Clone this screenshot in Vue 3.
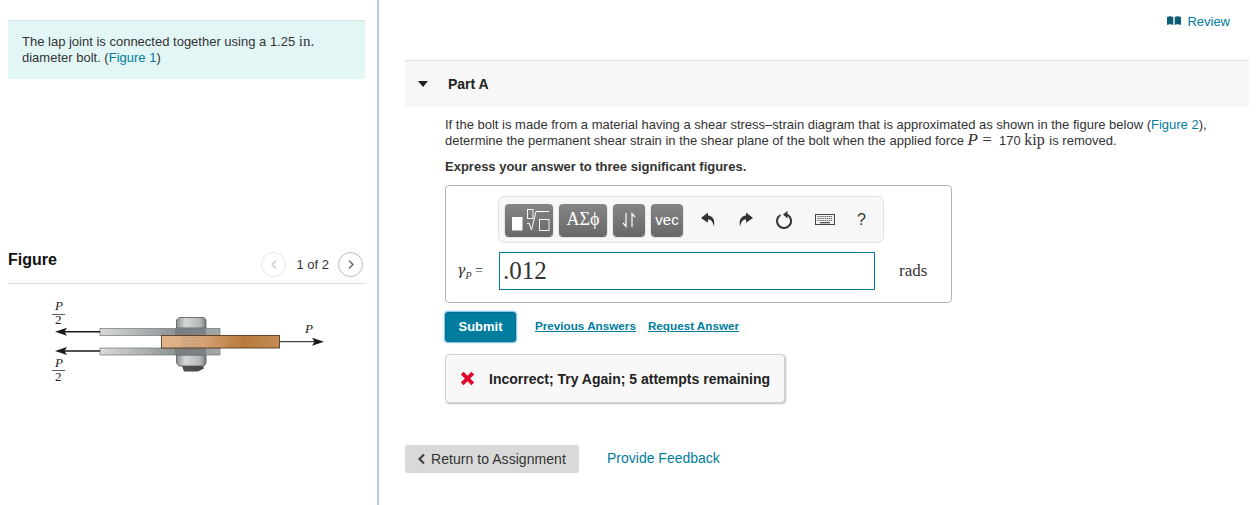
<script setup>
const tools = [
  { id: 'templates', label: '' },
  { id: 'symbols', label: 'ΑΣϕ' },
  { id: 'arrows', label: '' },
  { id: 'vec', label: 'vec' },
]
</script>

<template>
  <div class="page">
    <aside class="left">
      <div class="intro">
        The lap joint is connected together using a 1.25 <span class="math">in.</span><br />
        diameter bolt. (<a class="link">Figure 1</a>)
      </div>

      <div class="figure-head">
        <h3>Figure</h3>
        <div class="pager">
          <span class="round off"><svg viewBox="0 0 10 14" width="8" height="11"><path d="M7.5 2 2.5 7l5 5" fill="none" stroke="#c8c8c8" stroke-width="1.6" /></svg></span>
          <span class="count">1 of 2</span>
          <span class="round"><svg viewBox="0 0 10 14" width="8" height="11"><path d="M2.5 2l5 5-5 5" fill="none" stroke="#555" stroke-width="1.6" /></svg></span>
        </div>
      </div>

      <svg class="bolt" width="300" height="90" viewBox="0 0 300 90">
        <defs>
          <linearGradient id="plate" x1="0" x2="1" y1="0" y2="0">
            <stop offset="0" stop-color="#d8dad6" />
            <stop offset="0.6" stop-color="#8f9698" />
            <stop offset="1" stop-color="#a2a7a8" />
          </linearGradient>
          <linearGradient id="wood" x1="0" x2="1" y1="0" y2="0">
            <stop offset="0" stop-color="#e2b48c" />
            <stop offset="0.3" stop-color="#d9a97c" />
            <stop offset="0.7" stop-color="#b8793c" />
            <stop offset="1" stop-color="#c48c55" />
          </linearGradient>
          <linearGradient id="head" x1="0" x2="1" y1="0" y2="0">
            <stop offset="0" stop-color="#8e9192" />
            <stop offset="0.3" stop-color="#d5d7d8" />
            <stop offset="0.8" stop-color="#b5b8ba" />
            <stop offset="1" stop-color="#77797b" />
          </linearGradient>
        </defs>

        <path d="M136.5 33v-8l2.5-2.5h25l2 2.5v8z" fill="url(#head)" stroke="#555" stroke-width="0.8" />
        <path d="M136.5 60v8l2.5 3h25l2-3v-8z" fill="url(#head)" stroke="#555" stroke-width="0.8" />
        <path d="M142 71l2 5.5h14l6-3-1-2.5z" fill="#4c4c4c" />
        <rect x="60" y="33.5" width="120" height="7" fill="url(#plate)" stroke="#6f7779" stroke-width="0.7" />
        <rect x="60" y="53" width="120" height="7" fill="url(#plate)" stroke="#6f7779" stroke-width="0.7" />
        <rect x="135" y="33.5" width="31" height="7" fill="#5f6568" opacity="0.5" />
        <rect x="135" y="53" width="31" height="7" fill="#5f6568" opacity="0.5" />
        <rect x="121.5" y="40.5" width="118" height="12.5" fill="url(#wood)" stroke="#5b3b1f" stroke-width="0.9" />
        <g stroke="#b79b80" stroke-width="0.8" opacity="0.9">
          <path d="M142 43h19M142 46h19M142 49h19M142 51.5h19" />
        </g>

        <path d="M60 36.8H24" stroke="#1a1a1a" stroke-width="1.4" />
        <path d="M15 36.8l12-4-2.5 4 2.5 4z" fill="#1a1a1a" />
        <path d="M60 56H24" stroke="#1a1a1a" stroke-width="1.4" />
        <path d="M15 56l12-4-2.5 4 2.5 4z" fill="#1a1a1a" />
        <path d="M240 46.7h36" stroke="#1a1a1a" stroke-width="1" />
        <path d="M284 46.7l-12-4 2.5 4-2.5 4z" fill="#1a1a1a" />

        <text x="15" y="15" class="fig-i">P</text>
        <path d="M12 19.5h13" stroke="#333" stroke-width="0.8" />
        <text x="15" y="29" class="fig-n">2</text>
        <text x="15" y="72" class="fig-i">P</text>
        <path d="M12 75.5h13" stroke="#333" stroke-width="0.8" />
        <text x="15" y="86" class="fig-n">2</text>
        <text x="265" y="38" class="fig-i">P</text>
      </svg>
    </aside>

    <main class="right">
      <div class="review">
        <svg width="14" height="10" viewBox="0 0 14 10"><path d="M0 1c2-1 4.5-1 6.3 0v8C4.5 8 2 8 0 9zM7.7 1c1.800-1 4.300-1 6.300 0v8c-2-1-4.500-1-6.300 0z" fill="#0d5f78" /></svg>
        <a class="link">Review</a>
      </div>

      <div class="part-head">
        <span class="caret"></span>
        <strong>Part A</strong>
      </div>

      <div class="part-body">
        <p class="question">
          If the bolt is made from a material having a shear stress–strain diagram that is approximated as shown in the figure below (<a class="link">Figure 2</a>),<br />
          determine the permanent shear strain in the shear plane of the bolt when the applied force <span class="math force"><i>P</i> = </span>170 <span class="math kip">kip</span> is removed.
        </p>
        <p class="express">Express your answer to three significant figures.</p>

        <div class="answer">
          <div class="toolbar">
            <button v-for="t in tools" :key="t.id" class="tool" :class="`tool--${t.id}`">
              <svg v-if="t.id === 'templates'" width="48" height="32" viewBox="0 0 48 32">
                <rect x="7" y="13" width="10.5" height="13.5" fill="#fff" />
                <rect x="22.5" y="5.5" width="5.5" height="9" fill="none" stroke="#fff" stroke-width="0.9" />
                <path d="M22 19.5l2-.5 2.5 7L31 7.5h13" fill="none" stroke="#fff" stroke-width="1" />
                <rect x="34.5" y="15.5" width="9.5" height="11" fill="none" stroke="#fff" stroke-width="0.9" />
              </svg>
              <svg v-else-if="t.id === 'arrows'" width="16" height="18" viewBox="0 0 16 18">
                <path d="M5 2v13.5L2 12M11 16V2.5L14 6" fill="none" stroke="#fff" stroke-width="1.2" />
              </svg>
              <template v-else>{{ t.label }}</template>
            </button>
            <div class="actions">
              <svg width="15" height="15" viewBox="0 0 14 14"><path d="M6.500.5 0 5.500 6.500 10V7c2.800 0 4.500 1.500 5.500 6.500C13.500 7.500 11 3.500 6.500 3.200z" fill="#333" /></svg>
              <svg width="15" height="15" viewBox="0 0 14 14"><path d="M7.500.5 14 5.500 7.500 10V7C4.700 7 3 8.500 2 13.500.5 7.500 3 3.500 7.500 3.200z" fill="#333" /></svg>
              <svg width="18" height="18" viewBox="0 0 18 18"><path d="M5.500 4a7 7 0 1 0 6.500-.3" fill="none" stroke="#333" stroke-width="2" /><path d="M12.500 0v7.500L8 3.500z" fill="#333" /></svg>
              <svg width="20" height="11" viewBox="0 0 20 11"><rect x="0.5" y="0.5" width="19" height="10" fill="#f2f2f2" stroke="#444" /><path d="M2.5 2.500h15M2.500 4.500h15M2.500 6.500h15" stroke="#666" stroke-width="1.2" stroke-dasharray="1.3 .6" /><path d="M5 8.700h10" stroke="#444" stroke-width="1.2" /></svg>
              <span class="help">?</span>
            </div>
          </div>

          <div class="answer-row">
            <span class="var"><i class="gamma">γ</i><sub>P</sub> =</span>
            <div class="input">.012</div>
            <span class="unit">rads</span>
          </div>
        </div>

        <div class="submit-row">
          <button class="submit">Submit</button>
          <a class="link small">Previous Answers</a>
          <a class="link small">Request Answer</a>
        </div>

        <div class="feedback">
          <svg width="15" height="15" viewBox="0 0 14 14"><path d="M3.300.8 7 4.500 10.700.8l2.500 2.500L9.500 7l3.700 3.700-2.500 2.500L7 9.500l-3.700 3.700-2.500-2.500L4.500 7 .8 3.300z" fill="#e0062e" /></svg>
          <strong>Incorrect; Try Again; 5 attempts remaining</strong>
        </div>
      </div>

      <div class="foot">
        <button class="back">
          <svg width="9" height="12" viewBox="0 0 9 12"><path d="M7 1.500 2.500 6 7 10.500" fill="none" stroke="#444" stroke-width="2.2" /></svg>
          Return to Assignment
        </button>
        <a class="link feedback-link">Provide Feedback</a>
      </div>
    </main>
  </div>
</template>

<style>
html, body {
  margin: 0;
  background: #fff;
}
</style>

<style scoped>
.page {
  display: flex;
  height: 505px;
  overflow: hidden;
  font-family: "Liberation Sans", Arial, sans-serif;
  font-size: 13px;
  color: #333;
}

.link {
  color: #007c9e;
}

.math {
  font-family: "Liberation Serif", serif;
  font-size: 15px;
  line-height: 0;
}

.force {
  font-size: 17px;
  padding-right: 3px;
}

.kip {
  font-size: 16px;
  padding-right: 1px;
}

/* left column */
.left {
  box-sizing: border-box;
  width: 379px;
  flex: none;
  padding: 20px 12px 0 8px;
  border-right: 2px solid #b4cde2;
}

.intro {
  box-sizing: border-box;
  height: 59px;
  padding: 13px 14px 0;
  line-height: 16px;
  background: #e3f6f6;
  border-top: 1px solid #d8dfe2;
}

.figure-head {
  display: flex;
  justify-content: space-between;
  align-items: center;
  height: 42px;
  margin-top: 163px;
  padding-bottom: 2px;
  box-sizing: border-box;
  border-bottom: 1px solid #ddd;
}

.figure-head h3 {
  margin: 0 0 4px;
  font-size: 16px;
  line-height: 20px;
  color: #111;
}

.pager {
  display: flex;
  align-items: center;
  gap: 10px;
  margin-top: 6px;
  margin-right: 2px;
}

.count {
  margin-right: -1px;
}

.round {
  box-sizing: border-box;
  width: 25px;
  height: 25px;
  display: flex;
  align-items: center;
  justify-content: center;
  border: 1px solid #bbb;
  border-radius: 50%;
}

.round.off {
  border-color: #e3e3e3;
}

.bolt {
  display: block;
  margin: 11px 0 0 32px;
}

.fig-i {
  font: italic 13px "Liberation Serif", serif;
  fill: #222;
}

.fig-n {
  font: 13px "Liberation Serif", serif;
  fill: #222;
}

/* right column */
.right {
  flex: 1;
  min-width: 0;
  padding: 0 7px 0 26px;
}

.review {
  display: flex;
  justify-content: flex-end;
  align-items: center;
  gap: 6px;
  height: 42px;
  padding-right: 19px;
  margin-bottom: 18px;
}

.part-head {
  box-sizing: border-box;
  display: flex;
  align-items: center;
  height: 47px;
  padding-left: 13px;
  background: #f7f7f7;
  border-top: 1px solid #e2e2e2;
  font-size: 14px;
  color: #222;
}

.caret {
  width: 0;
  height: 0;
  margin-right: 20px;
  border-left: 5px solid transparent;
  border-right: 5px solid transparent;
  border-top: 6px solid #222;
}

.part-body {
  padding-left: 40px;
}

.question {
  margin: 10px 0 0;
  line-height: 16px;
  font-size: 13px;
}

.express {
  margin: 10px 0 0;
  line-height: 16px;
  font-weight: 700;
}

.answer {
  box-sizing: border-box;
  width: 507px;
  height: 118px;
  margin-top: 10px;
  padding: 10px 0 0 52px;
  border: 1px solid #b5b5b5;
  border-radius: 4px;
}

.toolbar {
  box-sizing: border-box;
  display: flex;
  align-items: center;
  gap: 6px;
  width: 386px;
  height: 47px;
  padding: 0 6px;
  background: #f7f7f7;
  border: 1px solid #e2e2e2;
  border-radius: 6px;
}

.tool {
  display: flex;
  align-items: center;
  justify-content: center;
  height: 32px;
  padding: 0;
  color: #fff;
  background: linear-gradient(#858587, #69696c);
  border: 0;
  border-radius: 4px;
  box-shadow: 0 1px 1px #555;
  font-family: "Liberation Serif", serif;
  font-size: 18px;
}

.tool--templates { width: 48px; }
.tool--symbols { width: 48px; }
.tool--arrows { width: 32px; }
.tool--vec { width: 32px; font-family: "Liberation Sans", sans-serif; font-size: 15px; }

.actions {
  display: flex;
  align-items: center;
  justify-content: space-between;
  flex: 1;
  padding: 0 11px 0 12px;
}

.help {
  font-size: 16px;
  color: #333;
}

.answer-row {
  display: flex;
  align-items: center;
  margin: 9px 0 0 -41px;
}

.var {
  flex: none;
  width: 42px;
  font-family: "Liberation Serif", serif;
  font-size: 14px;
}

.gamma {
  font-family: "DejaVu Serif", serif;
  font-size: 14px;
}

.var sub {
  font-size: 10px;
  font-style: italic;
}

.input {
  box-sizing: border-box;
  width: 376px;
  height: 38px;
  padding: 0 3px;
  line-height: 36px;
  flex: none;
  border: 1px solid #007c9e;
  font-family: "Liberation Serif", serif;
  font-size: 25px;
  color: #333;
}

.unit {
  margin-left: 24px;
  font-family: "Liberation Serif", serif;
  font-size: 17px;
}

.submit-row {
  display: flex;
  align-items: center;
  margin-top: 9px;
  height: 30px;
}

.submit {
  width: 71px;
  height: 30px;
  padding: 0 0 1px;
  margin-right: 19px;
  color: #fff;
  background: #007c9e;
  border: 1px solid #0a6f8d;
  border-radius: 3px;
  box-shadow: 0 0 0 1px #8cc8f0, 0 0 3px #5cb3f0;
  font-family: inherit;
  font-size: 13px;
  font-weight: 700;
}

.small {
  margin: 0 12px 3px 0;
  font-size: 11.7px;
  font-weight: 700;
  text-decoration: underline;
}

.feedback {
  box-sizing: border-box;
  display: flex;
  align-items: center;
  gap: 14px;
  width: 340px;
  height: 49px;
  margin-top: 12px;
  padding-left: 14px;
  background: #f8f8f8;
  border: 1px solid #d0d0d0;
  border-radius: 4px;
  box-shadow: 1px 1px 2px #bbb;
  font-size: 14px;
  color: #222;
}

.foot {
  display: flex;
  align-items: center;
  gap: 28px;
  margin-top: 42px;
}

.back {
  display: flex;
  align-items: center;
  gap: 5px;
  box-sizing: border-box;
  width: 174px;
  height: 28px;
  padding: 0 0 0 12px;
  background: #d9d9d9;
  border: 0;
  border-radius: 2px;
  font-family: inherit;
  font-size: 14px;
  letter-spacing: 0.05px;
  color: #333;
}

.feedback-link {
  margin-bottom: 2px;
  font-size: 14px;
}
</style>
